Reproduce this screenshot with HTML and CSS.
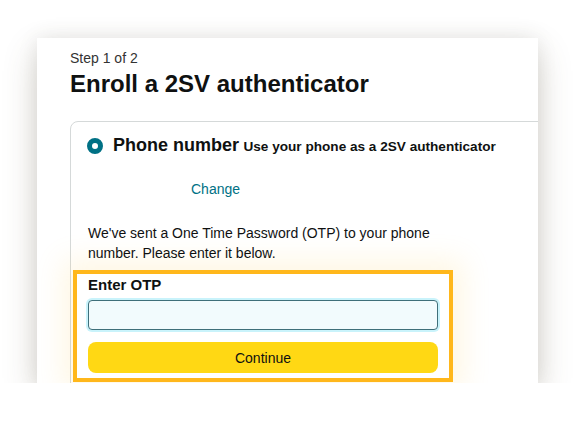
FILE: index.html
```html
<!DOCTYPE html>
<html lang="en">
<head>
<meta charset="utf-8">
<title>Enroll a 2SV authenticator</title>
<link rel="stylesheet" href="styles.css">
</head>
<body>
<main class="card">
  <p class="step">Step 1 of 2</p>
  <h1 class="title">Enroll a 2SV authenticator</h1>
  <section class="option">
    <div class="option-head">
      <span class="radio" aria-hidden="true"></span>
      <span class="option-text"><span class="option-name">Phone number</span> <span class="option-desc">Use your phone as a 2SV authenticator</span></span>
    </div>
    <a class="change" href="#">Change</a>
    <p class="info">We've sent a One Time Password (OTP) to your phone number. Please enter it below.</p>
    <div class="highlight">
      <label class="otp-label" for="otp">Enter OTP</label>
      <input class="otp-input" id="otp" type="text">
      <button class="continue" type="button">Continue</button>
    </div>
  </section>
</main>
</body>
</html>
```

FILE: styles.css
```css
* { box-sizing: border-box; }

html, body {
  margin: 0;
  padding: 0;
  background: #ffffff;
}

body {
  font-family: "Liberation Sans", Arial, sans-serif;
  color: #0f1111;
  padding-top: 38px;
  padding-left: 37px;
}

.card {
  width: 501px;
  height: 345px;
  background: #ffffff;
  overflow: hidden;
  padding: 10px 0 0 33px;
  box-shadow: 0 14px 32px rgba(95, 85, 55, 0.24), 0 0 20px rgba(0, 0, 0, 0.08);
}

.step {
  margin: 0;
  font-size: 14px;
  line-height: 20px;
  color: #333333;
}

.title {
  margin: 1px 0 0 0;
  font-size: 24px;
  line-height: 30px;
  font-weight: 700;
  color: #0f1111;
}

.option {
  margin-top: 22px;
  width: 520px;
  height: 300px;
  border: 1px solid #d5d9d9;
  border-radius: 8px;
  padding: 12px 0 0 16px;
}

.option-head {
  display: flex;
  align-items: center;
  height: 24px;
  white-space: nowrap;
}

.radio {
  width: 16px;
  height: 16px;
  border-radius: 50%;
  border: 5px solid #007185;
  background: #ffffff;
  margin-right: 10px;
  flex: none;
}

.option-text {
  line-height: 24px;
}

.option-name {
  font-size: 18px;
  font-weight: 700;
}

.option-desc {
  font-size: 13.6px;
  font-weight: 700;
}

.change {
  display: block;
  width: max-content;
  margin: 21px 0 0 104px;
  font-size: 14px;
  line-height: 20px;
  color: #007185;
  text-decoration: none;
}

.info {
  margin: 24px 0 0 1px;
  width: 350px;
  font-size: 14px;
  line-height: 20px;
}

.highlight {
  margin: 7px 0 0 -14px;
  width: 380px;
  border: 4px solid #ffb71b;
  padding: 1px 11px 5px 11px;
  background: #ffffff;
  display: flex;
  flex-direction: column;
  box-shadow: 0 0 26px 10px rgba(255, 206, 90, 0.16);
}

.otp-label {
  font-size: 15px;
  line-height: 20px;
  font-weight: 700;
}

.otp-input {
  margin-top: 5px;
  width: 350px;
  height: 30px;
  border: 1px solid #3f6f7a;
  border-radius: 4px;
  background: #f2fbfd;
  box-shadow: 0 0 0 2px #c9f3fb;
  outline: none;
  font: inherit;
}

.continue {
  margin-top: 12px;
  width: 350px;
  height: 31px;
  border: none;
  border-radius: 8px;
  background: #ffd814;
  font-family: inherit;
  font-size: 14px;
  color: #0f1111;
  padding: 0;
}
```
